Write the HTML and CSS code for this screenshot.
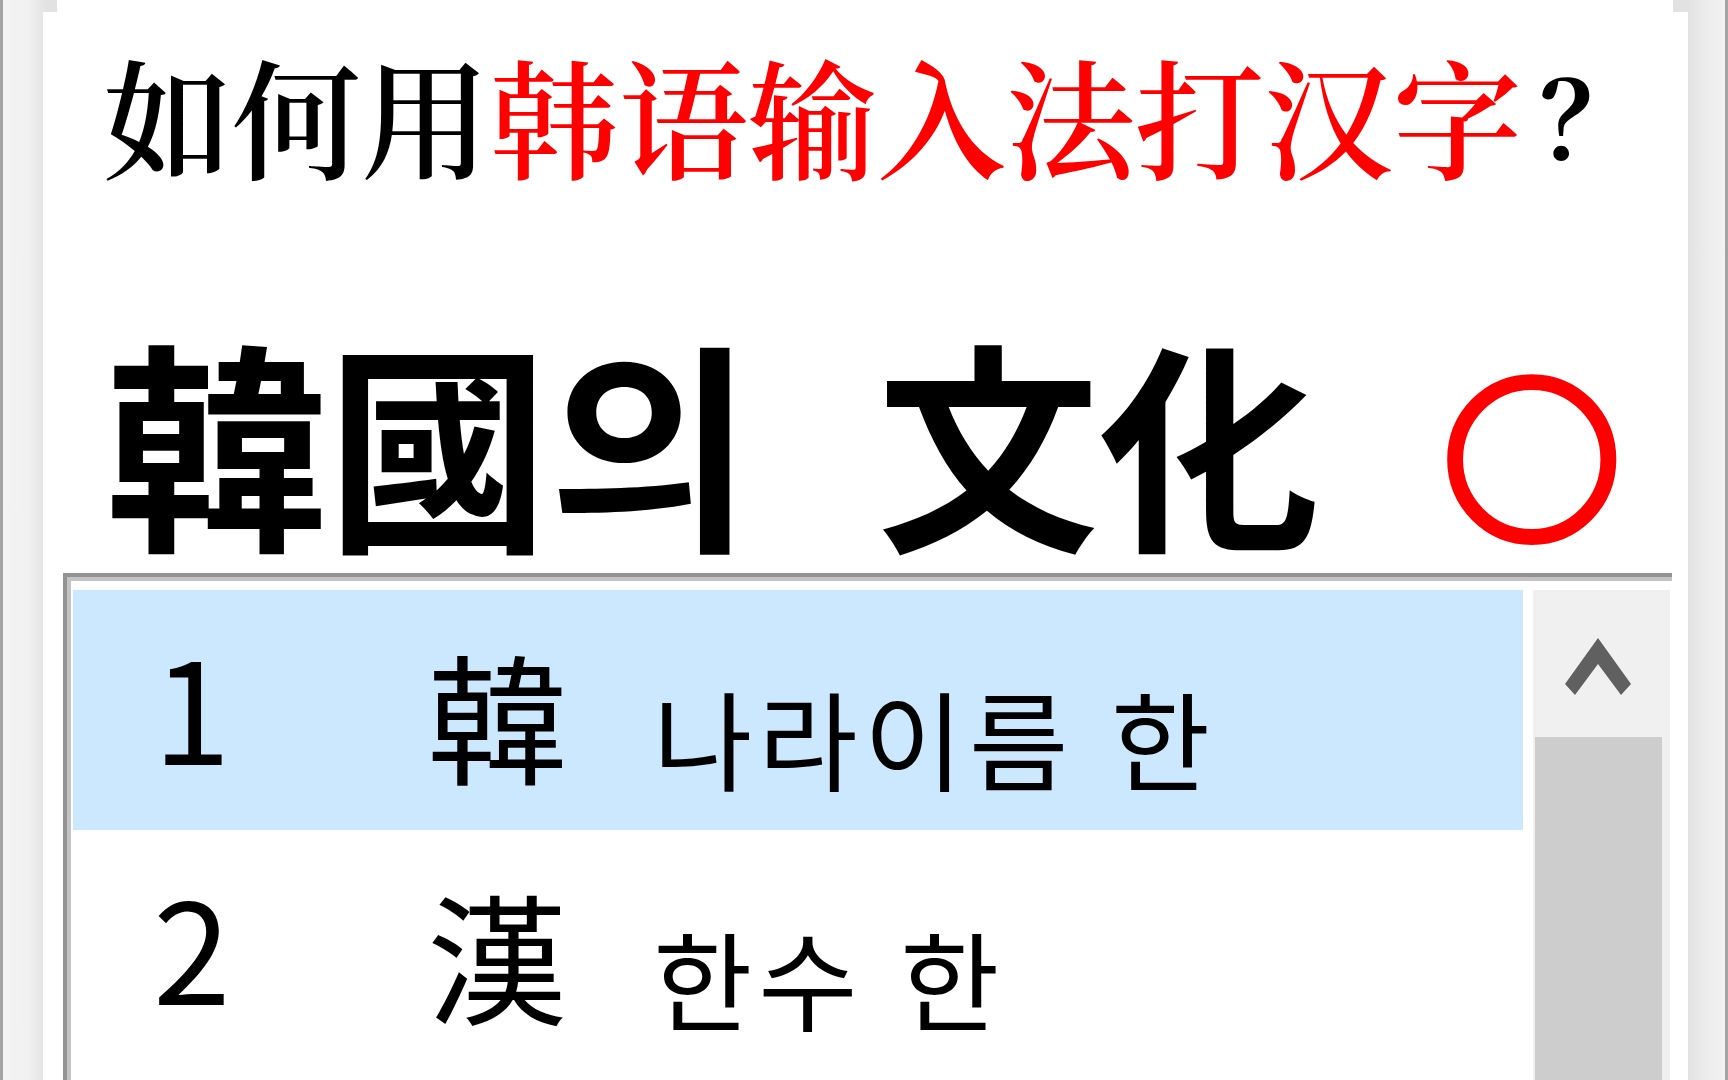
FILE: index.html
```html
<!DOCTYPE html>
<html lang="zh">
<head>
<meta charset="utf-8">
<title>如何用韩语输入法打汉字？</title>
<link rel="stylesheet" href="styles.css">
</head>
<body>
<div class="screen">
  <div class="window">
    <div class="window-tab"></div>
    <div class="window-body">
      <p class="question">如何用<span class="red">韩语输入法打汉字</span><span class="qmark">？</span></p>
      <p class="composition" lang="ko"><span class="word">韓國의</span><span class="word">文化</span><span class="mark">○</span></p>
      <div class="candidates" lang="ko">
        <div class="candidates-inner">
          <div class="rows">
            <div class="row selected">
              <span class="num">1</span>
              <span class="hanja">韓</span>
              <span class="gloss">나라이름 한</span>
            </div>
            <div class="row">
              <span class="num">2</span>
              <span class="hanja">漢</span>
              <span class="gloss">한수 한</span>
            </div>
          </div>
          <div class="scrollbar">
            <div class="scroll-up">
              <svg class="chevron" width="70" height="60" viewBox="0 0 70 60">
                <polygon points="35,0 68,46 58,57 35,26 12,57 2,46" fill="#606060"/>
              </svg>
            </div>
            <div class="thumb"></div>
          </div>
        </div>
      </div>
    </div>
  </div>
</div>
</body>
</html>
```
FILE: styles.css
```css
html, body {
  margin: 0;
  padding: 0;
  width: 1728px;
  height: 1080px;
  overflow: hidden;
}

body {
  background: #ededed;
  font-family: "Noto Sans CJK KR", "Noto Sans CJK SC", sans-serif;
  color: #000;
}

.screen {
  box-sizing: border-box;
  width: 1728px;
  height: 1080px;
  display: flex;
  border-left: 3px solid #a4a4a4;
  border-right: 3px solid #a4a4a4;
  padding: 0 37px 0 40px;
  background: linear-gradient(to right, #f3f3f3 0, #f1f1f1 25px, #e2e2e2 43px, #e2e2e2 1685px, #ebebeb 1700px, #f2f2f2 1722px);
}

.window {
  flex: 1;
  display: flex;
  flex-direction: column;
}

.window-tab {
  height: 12px;
  margin: 0 15px 0 14px;
  background: #fff;
}

.window-body {
  flex: 1;
  background: #fff;
  padding: 38px 16px 0 20px;
  display: flex;
  flex-direction: column;
}

.question {
  margin: 0;
  padding-left: 40px;
  height: 129px;
  font-family: "Noto Serif CJK SC", "Noto Sans CJK SC", serif;
  font-weight: 600;
  font-size: 129px;
  line-height: 129px;
  white-space: nowrap;
}

.red {
  color: #ff0000;
}

.qmark {
  font-weight: 700;
  font-size: 106px;
  line-height: 0;
  vertical-align: 11px;
  margin-left: 18px;
}

.composition {
  margin: 147px 0 25px 0;
  padding-left: 42px;
  height: 222px;
  font-family: "Noto Sans CJK KR", sans-serif;
  font-weight: 700;
  font-size: 222px;
  line-height: 222px;
  white-space: nowrap;
  display: flex;
}

.word {
  margin-right: 124px;
}

.mark {
  color: #ff0000;
  font-weight: 700;
  font-size: 179px;
  margin-left: -3px;
  padding-top: 13px;
  -webkit-text-stroke: 8px #ff0000;
}

.candidates {
  flex: 1;
  border-top: 4px solid #939393;
  border-left: 4px solid #939393;
}

.candidates-inner {
  box-sizing: border-box;
  height: 100%;
  border-top: 4px solid #c3c3c3;
  border-left: 4px solid #c3c3c3;
  padding: 9px 2px 0 2px;
  display: flex;
  gap: 10px;
}

.rows {
  flex: 1;
  display: flex;
  flex-direction: column;
}

.row {
  height: 240px;
  display: flex;
  align-items: flex-start;
  padding-left: 80px;
  white-space: nowrap;
}

.row.selected {
  background: #cce8ff;
}

.num {
  width: 274px;
  font-size: 140px;
  line-height: 140px;
  margin-top: 44px;
}

.hanja {
  width: 226px;
  font-size: 140px;
  line-height: 140px;
  margin-top: 53px;
}

.gloss {
  font-size: 108px;
  line-height: 108px;
  letter-spacing: 6px;
  margin-top: 92px;
}

.scrollbar {
  width: 137px;
  display: flex;
  flex-direction: column;
  background: #f0f0f0;
}

.scroll-up {
  height: 147px;
  box-sizing: border-box;
  padding: 48px 0 0 30px;
}

.chevron {
  display: block;
}

.thumb {
  flex: 1;
  margin: 0 8px 0 2px;
  background: #cdcdcd;
}
```
